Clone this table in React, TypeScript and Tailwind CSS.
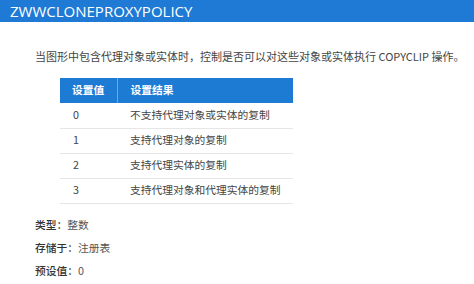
const rows = [
  { value: '0', result: '不支持代理对象或实体的复制' },
  { value: '1', result: '支持代理对象的复制' },
  { value: '2', result: '支持代理实体的复制' },
  { value: '3', result: '支持代理对象和代理实体的复制' },
];

const cjk = { fontFamily: '"Noto Sans CJK SC", "Open Sans", sans-serif' };

export default function App() {
  return (
    <div className="h-[284px] w-[474px] overflow-hidden bg-white" style={cjk}>
      {/* Title bar */}
      <div className="flex h-[22px] items-center bg-[#1e7ad4] pl-[10px]">
        <h1
          className="text-[15px] leading-none text-white"
          style={{ fontFamily: '"Open Sans", sans-serif' }}
        >
          ZWWCLONEPROXYPOLICY
        </h1>
      </div>

      <div className="pl-[35px]">
        <p className="mt-[26px] text-[11px] leading-[16px] text-[#444]">
          当图形中包含代理对象或实体时，控制是否可以对这些对象或实体执行 COPYCLIP 操作。
        </p>

        <table className="ml-[25px] mt-[14px] w-[233px] border-collapse text-[10.75px]">
          <thead>
            <tr className="h-[25px] bg-[#1d7bd4] text-left text-white">
              <th className="w-[57px] border-r border-[#6aa8e6] pl-[12px] font-bold">设置值</th>
              <th className="pl-[13px] font-bold">设置结果</th>
            </tr>
          </thead>
          <tbody>
            {rows.map((r) => (
              <tr key={r.value} className="h-[25px] border-b border-[#e6e6e6] text-[#444]">
                <td className="pl-[13px]">{r.value}</td>
                <td className="pl-[13px]">{r.result}</td>
              </tr>
            ))}
          </tbody>
        </table>

        <div className="mt-[13px] flex flex-col gap-[7px] text-[10.75px] leading-[16px] text-[#555]">
          <p>
            <span className="font-medium text-[#333]">类型：</span>整数
          </p>
          <p>
            <span className="font-medium text-[#333]">存储于：</span>注册表
          </p>
          <p>
            <span className="font-medium text-[#333]">预设值：</span>0
          </p>
        </div>
      </div>
    </div>
  );
}
